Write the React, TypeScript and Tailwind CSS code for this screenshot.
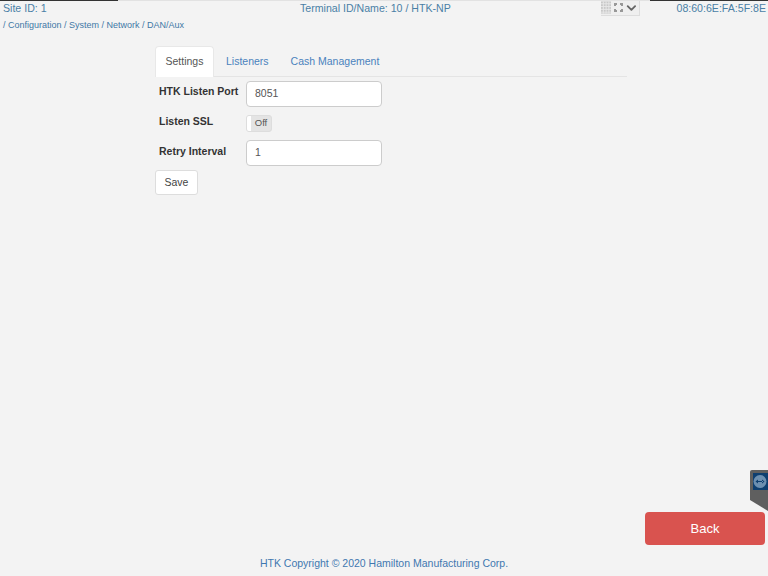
import { ChevronDown } from 'lucide-react'

function GridIcon() {
  return (
    <svg width="11" height="13" viewBox="0 0 11 13" className="block">
      <rect width="11" height="13" fill="#c8c8c8" />
      {[2, 5, 8].map(x => <rect key={x} x={x} y="0" width="1" height="13" fill="#e8e8e8" />)}
      {[2, 5, 8, 11].map(y => <rect key={y} x="0" y={y} width="11" height="1" fill="#e8e8e8" />)}
    </svg>
  )
}

function ExpandIcon() {
  return (
    <svg width="9" height="9" viewBox="0 0 9 9" className="block">
      <path d="M0 0 H3 V2 H2 V3 H0 Z M9 0 V3 H7 V2 H6 V0 Z M0 9 V6 H2 V7 H3 V9 Z M9 9 H6 V7 H7 V6 H9 Z" fill="#989898" />
    </svg>
  )
}

function Field({ value }: { value: string }) {
  return (
    <div className="w-[136px] h-[26px] bg-white border border-[#ccc] rounded-[4px] pl-[8px] flex items-center text-[10.5px] text-[#555]">
      {value}
    </div>
  )
}

export default function App() {
  return (
    <div className="relative h-[576px] w-[768px] overflow-hidden bg-[#f3f3f3] flex flex-col font-['Liberation_Sans',Arial,sans-serif]">
      <div className="h-px shrink-0 flex justify-between bg-[#e2e2e2]">
        <div className="w-[118px] bg-[#333]"></div>
        <div className="w-[118px] bg-[#333]"></div>
      </div>

      <header className="h-[15px] shrink-0 flex items-center text-[10.6px] text-[#4a7fa6] relative">
        <span className="pl-[3px] w-[300px]">Site ID: 1</span>
        <span className="w-[301px]">Terminal ID/Name: 10 / HTK-NP</span>
        <div className="w-[39px] h-[15px] -mt-px border-b border-r border-[#ddd] bg-[#efefef] flex items-center">
          <GridIcon />
          <span className="ml-[3px]"><ExpandIcon /></span>
          <ChevronDown size={16} strokeWidth={3} className="ml-[1px] text-[#666]" />
        </div>
        <span className="ml-auto pr-[2px]">08:60:6E:FA:5F:8E</span>
      </header>

      <div className="pl-[3px] mt-[2px] text-[9px] leading-[14px] text-[#3f78a6]">
        / Configuration / System / Network / DAN/Aux
      </div>

      <main className="ml-[155px] mt-[14px] w-[472px]">
        <div className="flex h-[31px] border-b border-[#e4e4e4] text-[10.5px]">
          <div className="w-[59px] h-[31px] bg-white rounded-t-[4px] border border-b-0 border-[#e8e8e8] flex items-center justify-center text-[#555]">
            Settings
          </div>
          <div className="ml-[12px] pt-px flex items-center text-[#4a82bd]">Listeners</div>
          <div className="ml-[22px] pt-px flex items-center text-[#4a82bd]">Cash Management</div>
        </div>

        <div className="mt-[4px] flex">
          <div className="w-[91px] pl-[4px] pt-[3px] text-[10.5px] font-bold text-[#333]">HTK Listen Port</div>
          <Field value="8051" />
        </div>

        <div className="mt-[8px] flex h-[17px]">
          <div className="w-[91px] pl-[4px] text-[10.5px] leading-[12px] font-bold text-[#333]">Listen SSL</div>
          <div className="w-[26px] h-[17px] bg-[#e4e4e4] border border-[#ddd] rounded-[3px] flex overflow-hidden">
            <div className="w-[4px] bg-white"></div>
            <div className="flex-1 flex items-center justify-center text-[9.5px] text-[#555]">Off</div>
          </div>
        </div>

        <div className="mt-[8px] flex">
          <div className="w-[91px] pl-[4px] pt-[4px] text-[10.5px] font-bold text-[#333]">Retry Interval</div>
          <Field value="1" />
        </div>

        <button className="mt-[4px] w-[43px] h-[25px] bg-white border border-[#ddd] rounded-[3px] text-[10.5px] text-[#444] flex items-center justify-center">
          Save
        </button>
      </main>

      <footer className="mt-auto h-[26px] text-center text-[10.5px] leading-[26px] text-[#3f78b0]">
        HTK Copyright © 2020 Hamilton Manufacturing Corp.
      </footer>

      <button className="absolute left-[645px] top-[512px] w-[120px] h-[33px] bg-[#d9534f] rounded-[4px] text-white text-[13px]">
        Back
      </button>

      <div className="absolute left-[750px] top-[470px]">
        <svg width="18" height="41" viewBox="0 0 18 41" className="block">
          <path d="M2 0 H18 V41 L0 30 V2 Q0 0 2 0 Z" fill="#5f5f5f" />
          <rect x="3" y="3" width="15" height="17" fill="#0e3f70" />
          <circle cx="10" cy="11.5" r="6.5" fill="#6c8fb0" />
          <path d="M5.5 11.5 L8 9.5 V13.5 Z M14.5 11.5 L12 9.5 V13.5 Z M7 11 H13 V12 H7 Z" fill="#0e3f70" />
        </svg>
      </div>
    </div>
  )
}
